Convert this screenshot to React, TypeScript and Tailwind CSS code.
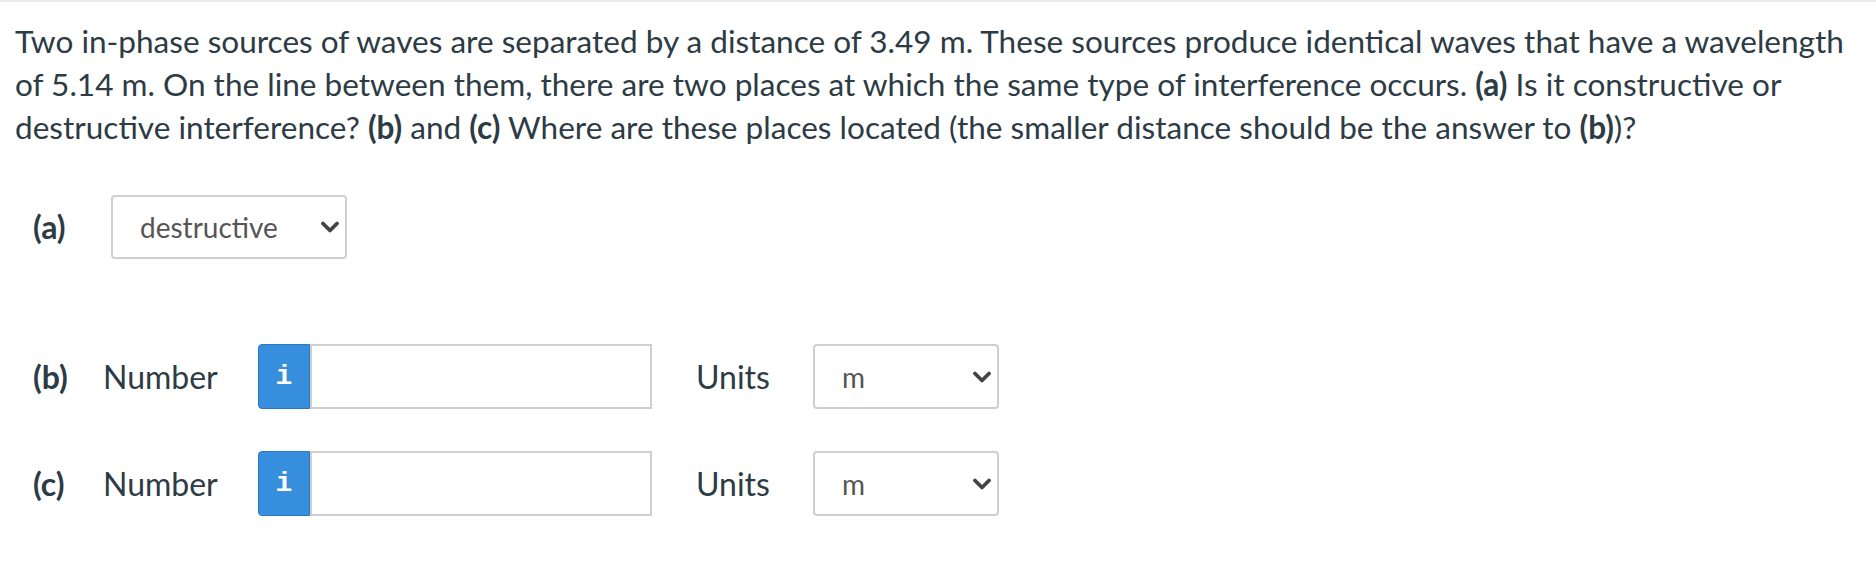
import React from "react";

function Chevron() {
  return (
    <svg width="18" height="12" viewBox="0 0 18 12" className="shrink-0">
      <polyline points="2,2.5 9,9.5 16,2.5" fill="none" stroke="#444444" strokeWidth="3.8" strokeLinecap="round" strokeLinejoin="round" />
    </svg>
  );
}

function Select({ value, w, h }: { value: string; w: string; h: string }) {
  return (
    <div className={`${w} ${h} flex items-center justify-between rounded-[4px] border-2 border-[#cfcfcf] bg-white pl-[27px] pr-[6px] text-[28px] text-[#555555]`}>
      <span>{value}</span>
      <Chevron />
    </div>
  );
}

function NumberRow({ label }: { label: string }) {
  return (
    <div className="flex items-center">
      <div className="w-[70px] font-bold">{label}</div>
      <div className="w-[155px]">Number</div>
      <div className="flex h-[65px] w-[394px]">
        <div className="flex w-[52px] items-center justify-center rounded-l-[4px] border border-[#2b78c0] bg-[#368edc] text-white">
          <span className="text-[28px] font-bold leading-none [font-family:'Liberation_Mono',monospace]">i</span>
        </div>
        <div className="flex-1 border-2 border-[#cfcfcf] bg-white"></div>
      </div>
      <div className="ml-[44px] w-[117px]">Units</div>
      <Select value="m" w="w-[186px]" h="h-[65px]" />
    </div>
  );
}

export default function App() {
  return (
    <div className="min-h-[568px] bg-white text-[#2d3b45] [font-family:Lato,'Noto_Sans',sans-serif]">
      <div className="h-[2px] bg-[#ebebeb]"></div>
      <div className="px-[15px] pt-[18px] text-[31.55px] leading-[43px]">
        <p>
          Two in-phase sources of waves are separated by a distance of 3.49 m. These sources produce identical waves that have a wavelength of 5.14 m. On the line between them, there are two places at which the same type of interference occurs. <b>(a)</b> Is it constructive or destructive interference? <b>(b)</b> and <b>(c)</b> Where are these places located (the smaller distance should be the answer to <b>(b)</b>)?
        </p>
      </div>
      <div className="pl-[33px] pt-[46px] text-[32px]">
        <div className="flex items-center">
          <div className="w-[78px] font-bold">(a)</div>
          <Select value="destructive" w="w-[236px]" h="h-[64px]" />
        </div>
        <div className="mt-[85px]">
          <NumberRow label="(b)" />
        </div>
        <div className="mt-[42px]">
          <NumberRow label="(c)" />
        </div>
      </div>
    </div>
  );
}
